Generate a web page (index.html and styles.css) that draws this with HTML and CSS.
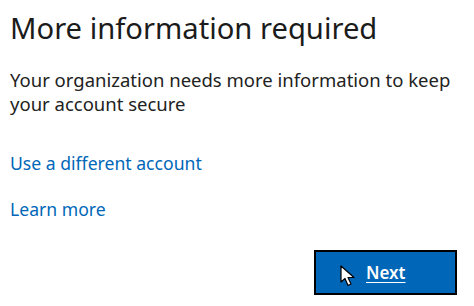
FILE: index.html
```html
<!DOCTYPE html>
<html lang="en">
<head>
    <meta charset="UTF-8">
    <meta name="viewport" content="width=device-width, initial-scale=1.0">
    <title>More information required</title>
    <link rel="stylesheet" href="styles.css">
</head>
<body>
    <div class="container">
        <h1 class="title">More information required</h1>
        <p class="description">Your organization needs more information to keep your account secure</p>

        <div class="links">
            <a href="#" class="link">Use a different account</a>
            <a href="#" class="link">Learn more</a>
        </div>

        <div class="actions">
            <a href="#" class="next-button">
                <svg class="cursor" width="16" height="22" viewBox="0 0 16 22">
                    <path d="M1 1 L1 17 L5 13.5 L8 20.5 L11 19 L8 12.5 L14 12.5 Z" fill="#ffffff" stroke="#000000" stroke-width="1.2" stroke-linejoin="round"/>
                </svg>
                <span class="next-label">Next</span>
            </a>
        </div>
    </div>
</body>
</html>
```

FILE: styles.css
```css
body {
    font-family: "Noto Sans", "Open Sans", sans-serif;
    background: #ffffff;
    color: #1b1b1b;
    margin: 0;
    padding: 0;
}

.container {
    padding: 8px 10px 0 10px;
}

.title {
    font-size: 29.2px;
    font-weight: 400;
    line-height: 40px;
    margin: 0;
    color: #1b1b1b;
}

.description {
    font-size: 18.5px;
    line-height: 24px;
    margin: 20px 0 0 0;
    color: #222222;
}

.links {
    display: flex;
    flex-direction: column;
    align-items: flex-start;
    gap: 22px;
    margin-top: 35px;
}

.link {
    font-size: 17.6px;
    line-height: 24px;
    color: #0067b8;
    text-decoration: none;
}

.actions {
    display: flex;
    justify-content: flex-end;
    margin-top: 29px;
    padding-right: 7px;
}

.next-button {
    display: flex;
    align-items: center;
    width: 139px;
    height: 41px;
    border: 2px solid #000000;
    background: #0067b8;
    color: #ffffff;
    text-decoration: none;
    box-sizing: content-box;
}

.cursor {
    margin-left: 24px;
    margin-top: 6px;
}

.next-label {
    margin-left: 10px;
    font-size: 17px;
    font-weight: 600;
    text-decoration: underline;
    text-underline-offset: 3px;
}
```
